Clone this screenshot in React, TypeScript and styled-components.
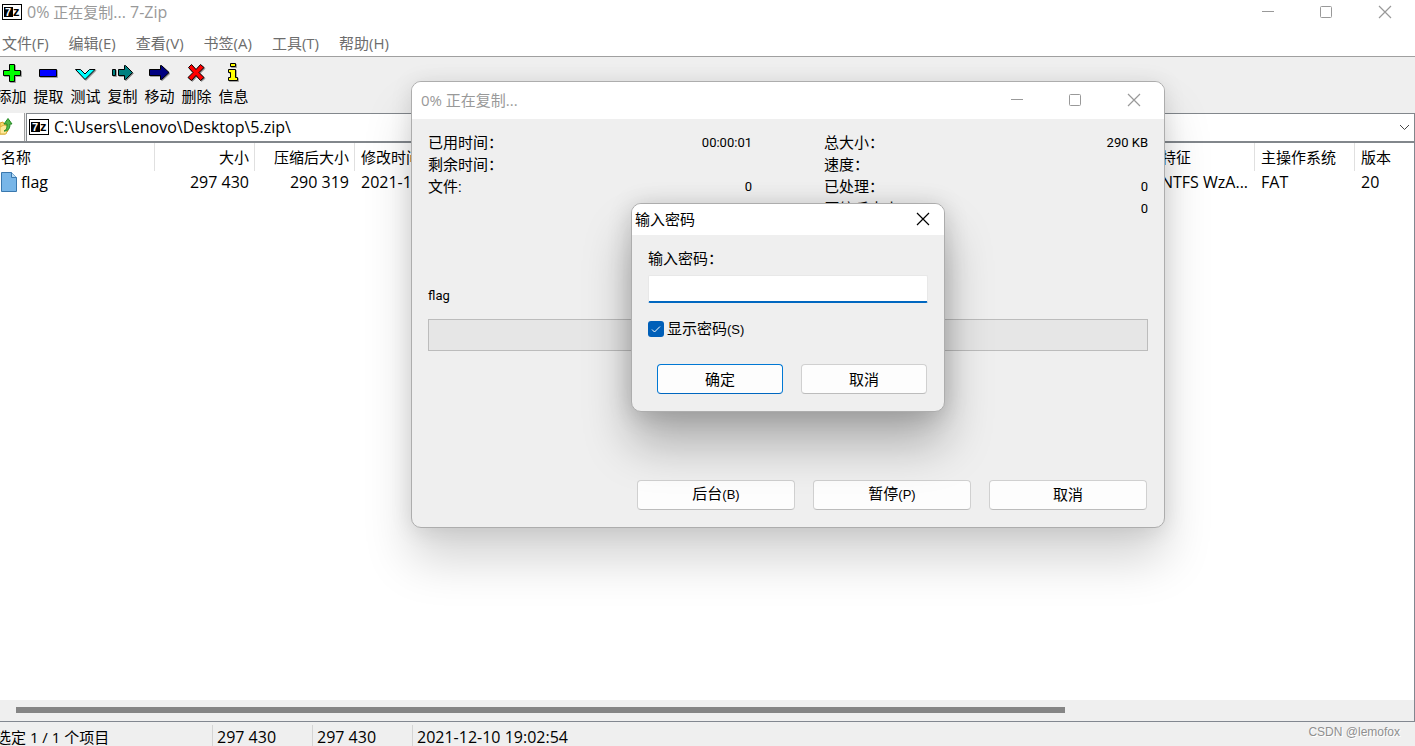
import React from "react";
import styled, { createGlobalStyle } from "styled-components";

const GlobalStyle = createGlobalStyle`
  *, *::before, *::after { box-sizing: border-box; }
  body {
    margin: 0;
    background: #fff;
    color: #000;
    font: 15px/24px "Open Sans", "Noto Sans CJK SC", sans-serif;
  }
  button, input { font: inherit; color: inherit; }
`;

const Desktop = styled.div`
  position: relative;
  display: flex;
  flex-direction: column;
  height: 100vh;
  overflow: hidden;
`;

const TitleBar = styled.header<{ $height: number; $active?: boolean }>`
  display: flex;
  align-items: center;
  justify-content: space-between;
  flex: none;
  height: ${(p) => p.$height}px;
  padding-bottom: 2px;
  background: #fff;
  color: ${(p) => (p.$active ? "#000" : "#999")};
`;

const Title = styled.h1<{ $inset: number }>`
  display: flex;
  align-items: center;
  gap: 5px;
  margin: 0;
  padding-left: ${(p) => p.$inset}px;
  font-size: 15px;
  font-weight: 400;
  white-space: nowrap;
`;

const Latin = styled.span`
  font-size: 16px;
`;

const Controls = styled.div`
  display: flex;
`;

const ControlButton = styled.button<{ $width?: number }>`
  display: flex;
  align-items: center;
  justify-content: center;
  width: ${(p) => p.$width ?? 58}px;
  height: 24px;
  padding: 0;
  border: 0;
  background: transparent;
`;

const MenuBar = styled.nav`
  display: flex;
  flex: none;
  gap: 20px;
  height: 31px;
  padding: 6px 2px 0;
`;

const MenuButton = styled.button`
  padding: 0;
  border: 0;
  background: transparent;
  color: #6d6d6d;
  white-space: nowrap;
  line-height: 24px;
  height: 24px;
`;

const Toolbar = styled.div`
  display: flex;
  flex: none;
  height: 57px;
  padding-top: 6px;
  border-top: 1px solid #a0a0a0;
  background: #efefef;
`;

const ToolButton = styled.button`
  display: flex;
  flex-direction: column;
  align-items: center;
  justify-content: flex-start;
  gap: 1px;
  flex: none;
  width: 37px;
  padding: 0;
  border: 0;
  background: transparent;
  white-space: nowrap;
  &:first-child { margin-left: -7px; }
`;

const AddressBar = styled.div`
  display: flex;
  flex: none;
  gap: 1px;
  height: 30px;
  background: #efefef;
  border-bottom: 2px solid #82878c;
`;

const UpButton = styled.button`
  width: 25px;
  padding: 0 0 2px;
  border: 0;
  border-right: 1px solid #a0a0a0;
  background: #fff;
  text-align: left;
  svg { display: block; }
`;

const Combo = styled.div`
  display: flex;
  align-items: center;
  flex: 1;
  gap: 5px;
  padding: 0 0 1px 2px;
  border: 1px solid #82878c;
  border-bottom: 0;
  background: #fff;
`;

const PathInput = styled.input`
  flex: 1;
  min-width: 0;
  height: 24px;
  padding: 0;
  border: 0;
  background: transparent;
  outline: 0;
  font-size: 16px;
`;

const ListPane = styled.main`
  flex: 1;
  min-height: 0;
  border-right: 1px solid #828790;
  background: #fff;
`;

const FileTable = styled.table`
  width: 100%;
  table-layout: fixed;
  border-collapse: separate;
  border-spacing: 0;
`;

const HeadCell = styled.th<{ $right?: boolean; $width?: number }>`
  width: ${(p) => (p.$width ? `${p.$width}px` : "auto")};
  height: 28px;
  padding: 0 5px 1px 6px;
  border-right: 1px solid #e0e0e0;
  font-weight: 400;
  text-align: ${(p) => (p.$right ? "right" : "left")};
  white-space: nowrap;
  &:first-child { padding-left: 1px; }
  &:last-child { border-right: 0; }
`;

const Cell = styled.td<{ $right?: boolean }>`
  height: 24px;
  padding: 0 6px 2px;
  font-size: 16px;
  line-height: 22px;
  text-align: ${(p) => (p.$right ? "right" : "left")};
  white-space: nowrap;
  &:first-child { padding-left: 1px; }
`;

const FileName = styled.span`
  display: flex;
  align-items: center;
  gap: 3px;
`;

const ScrollTrack = styled.div`
  display: flex;
  align-items: center;
  flex: none;
  height: 21px;
  padding: 0 0 1px 16px;
  background: #efefef;
  border-right: 1px solid #828790;
`;

const ScrollThumb = styled.div`
  width: 75%;
  height: 6px;
  background: #858585;
`;

const StatusBar = styled.footer`
  display: flex;
  flex: none;
  height: 25px;
  border-top: 1px solid #828790;
  background: #efefef;
`;

const StatusCell = styled.div<{ $width?: number }>`
  flex: ${(p) => (p.$width ? `0 0 ${p.$width}px` : "1")};
  margin-top: 3px;
  padding-left: 4px;
  border-right: 1px solid #d4d4d4;
  font-size: 16px;
  white-space: nowrap;
  &:first-child { padding-left: 0; text-indent: -4px; font-size: 15px; }
  &:last-child { border-right: 0; }
`;

const Watermark = styled.span`
  position: absolute;
  right: 15px;
  bottom: 4px;
  color: #8f8f8f;
  font: 12px/20px "Liberation Sans", sans-serif;
  text-shadow: 1px 1px 0 #fff;
`;

const Dialog = styled.section<{ $x: number; $y: number; $width: number; $front?: boolean }>`
  position: absolute;
  left: ${(p) => p.$x}px;
  top: ${(p) => p.$y}px;
  width: ${(p) => p.$width}px;
  overflow: hidden;
  border: 1px solid #adadad;
  border-radius: 10px;
  background: #efefef;
  box-shadow: ${(p) =>
    p.$front
      ? "0 32px 48px rgba(0,0,0,.28), 0 2px 24px rgba(0,0,0,.16)"
      : "0 32px 48px rgba(0,0,0,.17), 0 2px 22px rgba(0,0,0,.1)"};
`;

const ProgressBody = styled.div`
  display: flex;
  flex-direction: column;
  padding: 13px 16px 17px;
  font: 13px/22px Roboto, "Noto Sans CJK SC", sans-serif;
`;

const Stats = styled.div`
  display: grid;
  grid-template-columns: 1fr 1fr;
  column-gap: 72px;
  align-items: start;
`;

const StatList = styled.dl`
  margin: 0;
`;

const StatRow = styled.div`
  display: flex;
  justify-content: space-between;
  height: 22px;
`;

const StatLabel = styled.dt`
  font-size: 15px;
`;

const StatValue = styled.dd`
  margin: 0;
`;

const CurrentFile = styled.p`
  margin: 65px 0 12px;
`;

const ProgressBar = styled.progress`
  display: block;
  width: 100%;
  height: 32px;
  appearance: none;
  border: 1px solid #bcbcbc;
  background: #e6e6e6;
  &::-webkit-progress-bar { background: #e6e6e6; }
  &::-webkit-progress-value { background: #06b025; }
`;

const ButtonRow = styled.div<{ $top: number; $edge: number }>`
  display: flex;
  justify-content: flex-end;
  gap: 18px;
  margin-top: ${(p) => p.$top}px;
  padding-right: ${(p) => p.$edge}px;
`;

const PushButton = styled.button<{ $width: number; $primary?: boolean }>`
  width: ${(p) => p.$width}px;
  height: 30px;
  padding: 0 0 1px;
  border: 1px solid ${(p) => (p.$primary ? "#0078d4" : "#d0d0d0")};
  border-bottom-color: ${(p) => (p.$primary ? "#0067c0" : "#bcbcbc")};
  border-radius: 4px;
  background: #fdfdfd;
  font-size: 15px;
  line-height: 22px;
`;

const Hotkey = styled.span`
  font-family: "Liberation Sans", sans-serif;
  font-size: 13px;
`;

const PasswordForm = styled.form`
  padding: 12px 16px 17px;
  font: 15px/22px "Noto Sans CJK SC", sans-serif;
`;

const FieldLabel = styled.label`
  display: block;
`;

const PasswordInput = styled.input`
  display: block;
  width: 100%;
  height: 28px;
  margin: 6px 0 15px;
  padding: 0 6px;
  border: 1px solid #e8e8e8;
  border-bottom: 2px solid #0067c0;
  border-radius: 2px;
  background: #fff;
  outline: 0;
`;

const CheckLabel = styled.label`
  display: flex;
  align-items: center;
  gap: 3px;
  height: 22px;
`;

const CheckMark = styled.span`
  display: grid;
  width: 16px;
  height: 16px;
  > * { grid-area: 1 / 1; }
  svg { pointer-events: none; }
`;

const CheckBox = styled.input`
  width: 16px;
  height: 16px;
  margin: 0;
  appearance: none;
  border-radius: 3px;
  background: #c8c8c8;
  &:checked { background: #005fb8; }
`;

const SevenZipIcon = () => (
  <svg width="20" height="16" viewBox="0 0 20 16" aria-hidden="true">
    <rect width="20" height="16" />
    <rect x="1" y="1" width="18" height="14" fill="#fff" />
    <rect x="2" y="3" width="9" height="10" />
    <text x="3" y="12" fill="#fff" fontFamily="Liberation Sans" fontWeight="700" fontSize="11">7</text>
    <text x="11" y="12" fontFamily="Liberation Sans" fontWeight="700" fontSize="13">z</text>
  </svg>
);

const MinimizeIcon = () => (
  <svg width="14" height="14" viewBox="0 0 14 14" stroke="currentColor" aria-hidden="true">
    <path d="M1 6.500h12" />
  </svg>
);

const MaximizeIcon = () => (
  <svg width="14" height="14" viewBox="0 0 14 14" fill="none" stroke="currentColor" aria-hidden="true">
    <rect x="1.500" y="1.500" width="11" height="11" rx="1" />
  </svg>
);

const CloseIcon = () => (
  <svg width="14" height="14" viewBox="0 0 14 14" stroke="currentColor" strokeWidth="1.2" aria-hidden="true">
    <path d="M1 1l12 12M13 1L1 13" />
  </svg>
);

const toolShapes = {
  add: { fill: "#00ff00", d: "M8.500 1.500h5v6h6v5h-6v6h-5v-6h-6v-5h6z" },
  extract: { fill: "#0000ff", d: "M1.500 6.500h17v7h-17z" },
  test: { fill: "#00ffff", d: "M.5 6.500h5l4.500 4.500 4.500-4.500h5.500L10 16.500z" },
  copy: { fill: "#008080", d: "M.5 6.500h3v6h-3zM6.500 6.500h6v-4h1l7 7-7 7h-1v-4h-6z" },
  move: { fill: "#000080", d: "M.5 6.500h11v-4h1l7.500 7-7.500 7h-1v-4H.5z" },
  remove: { fill: "#ff0000", d: "M2.500 4.500l3-3 4.500 5 4.500-5 3.500 3-5 5 5 5-3.500 3-4.500-5-4.500 5-3.500-3 5-5z" },
  info: { fill: "#ffff00", d: "M7.500.5h5v3h-5zM5.500 6.500h7v8h2v3h-9v-3h2v-5h-2z" },
};

const ToolIcon = ({ name }: { name: keyof typeof toolShapes }) => (
  <svg width="22" height="20" viewBox="0 0 22 20" aria-hidden="true">
    <path d={toolShapes[name].d} transform="translate(1 1)" fill="#808080" stroke="#a0a0a0" />
    <path d={toolShapes[name].d} fill={toolShapes[name].fill} stroke="#000" />
  </svg>
);

const FolderUpIcon = () => (
  <svg width="14" height="20" viewBox="0 0 14 20" aria-hidden="true">
    <path d="M0 7l3-1 1 2h4v7l-3 3H0z" fill="#f5d76e" stroke="#d3a52c" />
    <path d="M0 11l4-2 5 1-3 8H0z" fill="#ffe99a" stroke="#d9ae3a" />
    <path d="M4 15c3-1 3-4 3-7H4l4-5.500L12 8h-2c0 5-2 7-6 7z" fill="#52b848" stroke="#228a22" />
  </svg>
);

const FileIcon = () => (
  <svg width="17" height="20" viewBox="0 0 17 20" aria-hidden="true">
    <path d="M.5.5h10l5 5v14H.5z" fill="#78b6e8" stroke="#3a78ae" />
    <path d="M10.500.5v5h5" fill="#b9dcf5" stroke="#3a78ae" />
  </svg>
);

const menus = ["文件(F)", "编辑(E)", "查看(V)", "书签(A)", "工具(T)", "帮助(H)"];

const tools: { name: keyof typeof toolShapes; label: string }[] = [
  { name: "add", label: "添加" },
  { name: "extract", label: "提取" },
  { name: "test", label: "测试" },
  { name: "copy", label: "复制" },
  { name: "move", label: "移动" },
  { name: "remove", label: "删除" },
  { name: "info", label: "信息" },
];

const columns: { label: string; width?: number; right?: boolean }[] = [
  { label: "名称", width: 155 },
  { label: "大小", width: 100, right: true },
  { label: "压缩后大小", width: 100, right: true },
  { label: "修改时间" },
  { label: "特征", width: 100 },
  { label: "主操作系统", width: 100 },
  { label: "版本", width: 59 },
];

const timeStats = [
  ["已用时间：", "00:00:01"],
  ["剩余时间：", ""],
  ["文件:", "0"],
];

const sizeStats = [
  ["总大小：", "290 KB"],
  ["速度：", ""],
  ["已处理：", "0"],
  ["压缩后大小：", "0"],
];

const WindowControls = () => (
  <Controls>
    <ControlButton aria-label="最小化"><MinimizeIcon /></ControlButton>
    <ControlButton aria-label="最大化"><MaximizeIcon /></ControlButton>
    <ControlButton $width={60} aria-label="关闭"><CloseIcon /></ControlButton>
  </Controls>
);

const StatGroup = ({ rows }: { rows: string[][] }) => (
  <StatList>
    {rows.map(([label, value]) => (
      <StatRow key={label}>
        <StatLabel>{label}</StatLabel>
        <StatValue>{value}</StatValue>
      </StatRow>
    ))}
  </StatList>
);

export default function App() {
  return (
    <Desktop>
      <GlobalStyle />
      <TitleBar $height={25}>
        <Title $inset={2}>
          <SevenZipIcon />
          <span><Latin>0%</Latin> 正在复制<Latin>... 7-Zip</Latin></span>
        </Title>
        <WindowControls />
      </TitleBar>
      <MenuBar>
        {menus.map((menu) => <MenuButton key={menu}>{menu}</MenuButton>)}
      </MenuBar>
      <Toolbar>
        {tools.map((tool) => (
          <ToolButton key={tool.name}><ToolIcon name={tool.name} />{tool.label}</ToolButton>
        ))}
      </Toolbar>
      <AddressBar>
        <UpButton aria-label="向上"><FolderUpIcon /></UpButton>
        <Combo>
          <SevenZipIcon />
          <PathInput aria-label="路径" defaultValue={"C:\\Users\\Lenovo\\Desktop\\5.zip\\"} />
          <ControlButton $width={20} aria-label="展开">
            <svg width="11" height="7" viewBox="0 0 11 7" fill="none" stroke="#444" aria-hidden="true">
              <path d="M1 1l4.500 4.500L10 1" />
            </svg>
          </ControlButton>
        </Combo>
      </AddressBar>
      <ListPane>
        <FileTable>
          <thead>
            <tr>
              {columns.map((col) => (
                <HeadCell key={col.label} $width={col.width} $right={col.right}>{col.label}</HeadCell>
              ))}
            </tr>
          </thead>
          <tbody>
            <tr>
              <Cell><FileName><FileIcon />flag</FileName></Cell>
              <Cell $right>297 430</Cell>
              <Cell $right>290 319</Cell>
              <Cell>2021-1</Cell>
              <Cell>NTFS WzA...</Cell>
              <Cell>FAT</Cell>
              <Cell>20</Cell>
            </tr>
          </tbody>
        </FileTable>
      </ListPane>
      <ScrollTrack><ScrollThumb /></ScrollTrack>
      <StatusBar>
        <StatusCell $width={213}>选定 1 / 1 个项目</StatusCell>
        <StatusCell $width={100}>297 430</StatusCell>
        <StatusCell $width={100}>297 430</StatusCell>
        <StatusCell>2021-12-10 19:02:54</StatusCell>
      </StatusBar>
      <Watermark>CSDN @lemofox</Watermark>

      <Dialog $x={411} $y={81} $width={754}>
        <TitleBar $height={37}>
          <Title $inset={9}>0% 正在复制...</Title>
          <WindowControls />
        </TitleBar>
        <ProgressBody>
          <Stats>
            <StatGroup rows={timeStats} />
            <StatGroup rows={sizeStats} />
          </Stats>
          <CurrentFile>flag</CurrentFile>
          <ProgressBar aria-label="进度" value={0} max={100} />
          <ButtonRow $top={129} $edge={1}>
            <PushButton $width={158}>后台<Hotkey>(B)</Hotkey></PushButton>
            <PushButton $width={158}>暂停<Hotkey>(P)</Hotkey></PushButton>
            <PushButton $width={158}>取消</PushButton>
          </ButtonRow>
        </ProgressBody>
      </Dialog>

      <Dialog $x={631} $y={203} $width={314} $front>
        <TitleBar $height={31} $active>
          <Title $inset={3}>输入密码</Title>
          <ControlButton $width={42} aria-label="关闭"><CloseIcon /></ControlButton>
        </TitleBar>
        <PasswordForm onSubmit={(event) => event.preventDefault()}>
          <FieldLabel htmlFor="password">输入密码：</FieldLabel>
          <PasswordInput id="password" type="text" />
          <CheckLabel>
            <CheckMark>
              <CheckBox type="checkbox" defaultChecked />
              <svg width="16" height="16" viewBox="0 0 16 16" fill="none" stroke="#fff" aria-hidden="true">
                <path d="M4 8.500l2.500 2.500L12 5.500" />
              </svg>
            </CheckMark>
            <span>显示密码<Hotkey>(S)</Hotkey></span>
          </CheckLabel>
          <ButtonRow $top={24} $edge={1}>
            <PushButton $width={126} $primary type="submit">确定</PushButton>
            <PushButton $width={126} type="button">取消</PushButton>
          </ButtonRow>
        </PasswordForm>
      </Dialog>
    </Desktop>
  );
}
